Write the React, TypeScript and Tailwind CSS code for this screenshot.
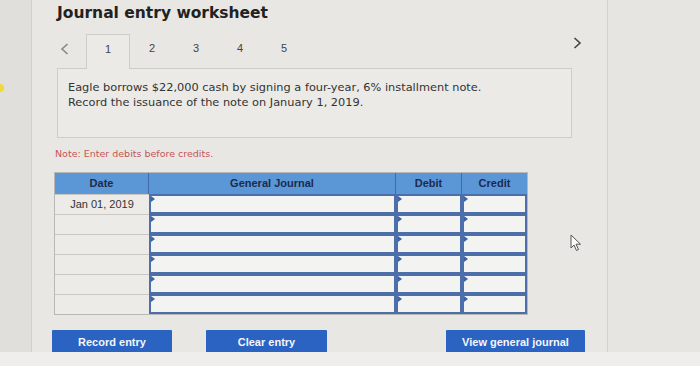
import React from "react";

const tabs = ["1", "2", "3", "4", "5"];
const rows = ["Jan 01, 2019", "", "", "", "", ""];

const InputCell: React.FC<{ w: string }> = ({ w }) => (
  <div className={`${w} relative bg-[#f3f3f1] border-2 border-[#4d6fa9]`}>
    <span className="absolute left-0 top-0 w-0 h-0 border-t-[3px] border-b-[3px] border-l-[4px] border-t-transparent border-b-transparent border-l-[#3b63b0]" />
  </div>
);

const Chevron: React.FC<{ dir: "left" | "right"; color: string }> = ({ dir, color }) => (
  <svg width="9" height="12" viewBox="0 0 9 12">
    <path
      d={dir === "left" ? "M7.5 1 L2 6 L7.5 11" : "M1.5 1 L7 6 L1.5 11"}
      fill="none"
      stroke={color}
      strokeWidth="1.6"
    />
  </svg>
);

const App: React.FC = () => {
  return (
    <div className="relative w-[700px] h-[366px] overflow-hidden bg-[#e6e4e0] flex flex-col">
      <span className="absolute -left-[4px] top-[84px] w-[8px] h-[8px] rounded-full bg-[#f2d93a]" />

      <div className="h-[352px] shrink-0 flex">
        <div className="w-[32px] bg-[#e1dfdb] border-r border-[#d2d0cc]" />

        <div className="w-[576px] h-full overflow-hidden bg-[#e9e7e3] border-r border-[#d3d1cd] flex flex-col">
          <h1 className="shrink-0 ml-[25px] mt-[3px] h-[20px] text-[15.5px] leading-[20px] font-bold text-[#222] font-['DejaVu_Sans',sans-serif]">
            Journal entry worksheet
          </h1>

          <div className="shrink-0 ml-[28px] mt-[11px] w-[522px] h-[34px] flex items-start relative z-10 font-['Liberation_Sans',Arial,sans-serif]">
            <span className="w-[26px] pt-[9px]">
              <Chevron dir="left" color="#888" />
            </span>
            {tabs.map((t, i) => (
              <div
                key={t}
                className={
                  i === 0
                    ? "w-[44px] h-[35px] pt-[7px] text-center text-[11px] leading-[14px] text-[#444] bg-[#ebeae7] border border-b-0 border-[#cfcdca]"
                    : "w-[44px] h-[35px] pt-[7px] text-center text-[11px] leading-[14px] text-[#444]"
                }
              >
                {t}
              </div>
            ))}
            <div className="flex-1" />
            <span className="pt-[3px]">
              <Chevron dir="right" color="#444" />
            </span>
          </div>

          <div className="shrink-0 ml-[25px] w-[515px] h-[70px] bg-[#ebeae7] border border-[#cfcdca] pl-[10px] pt-[11px] text-[11.35px] leading-[15px] text-[#333] font-['DejaVu_Sans',sans-serif]">
            <p>Eagle borrows $22,000 cash by signing a four-year, 6% installment note.</p>
            <p>Record the issuance of the note on January 1, 2019.</p>
          </div>

          <p className="shrink-0 ml-[23px] mt-[10px] text-[9.5px] leading-[12px] text-[#c4555a] font-['DejaVu_Sans',sans-serif]">
            Note: Enter debits before credits.
          </p>

          <div className="shrink-0 ml-[22px] mt-[12px] w-[474px] border border-[#b9b8b5] font-['Liberation_Sans',Arial,sans-serif] text-[11px]">
            <div className="flex h-[21px] bg-[#5b96d7] text-[#1b2b4d] font-bold">
              <div className="w-[94px] flex items-center justify-center border-r border-[#3e6aa8]">Date</div>
              <div className="w-[247px] flex items-center justify-center border-r border-[#3e6aa8]">General Journal</div>
              <div className="w-[66px] flex items-center justify-center border-r border-[#3e6aa8]">Debit</div>
              <div className="flex-1 flex items-center justify-center">Credit</div>
            </div>
            {rows.map((d, i) => (
              <div key={i} className="flex h-[20px]">
                <div className="w-[94px] flex items-center justify-center bg-[#ecebe8] border-t border-[#c9c8c5] text-[#333]">
                  {d}
                </div>
                <InputCell w="w-[247px]" />
                <InputCell w="w-[66px]" />
                <InputCell w="flex-1" />
              </div>
            ))}
          </div>

          <div className="shrink-0 mt-[15px] ml-[20px] flex font-['Liberation_Sans',Arial,sans-serif] text-[11px] font-bold text-[#f4f6fb]">
            <button className="w-[120px] h-[24px] bg-[#2a63c2] rounded-[1px]">Record entry</button>
            <button className="ml-[34px] w-[121px] h-[24px] bg-[#2a63c2] rounded-[1px]">Clear entry</button>
            <button className="ml-[119px] w-[139px] h-[24px] bg-[#2a63c2] rounded-[1px]">View general journal</button>
          </div>
        </div>

        <div className="flex-1 bg-[#e7e5e1]" />
      </div>

      <div className="flex-1 bg-[#efeeeb]" />

      <svg className="absolute left-[570px] top-[234px]" width="13" height="18" viewBox="0 0 13 18">
        <path
          d="M1 1 L1 14 L4 11 L6.5 16.5 L8.5 15.5 L6 10.2 L10.5 10.2 Z"
          fill="#fafafa"
          stroke="#555"
          strokeWidth="1"
          strokeLinejoin="round"
        />
      </svg>
    </div>
  );
};

export default App;
